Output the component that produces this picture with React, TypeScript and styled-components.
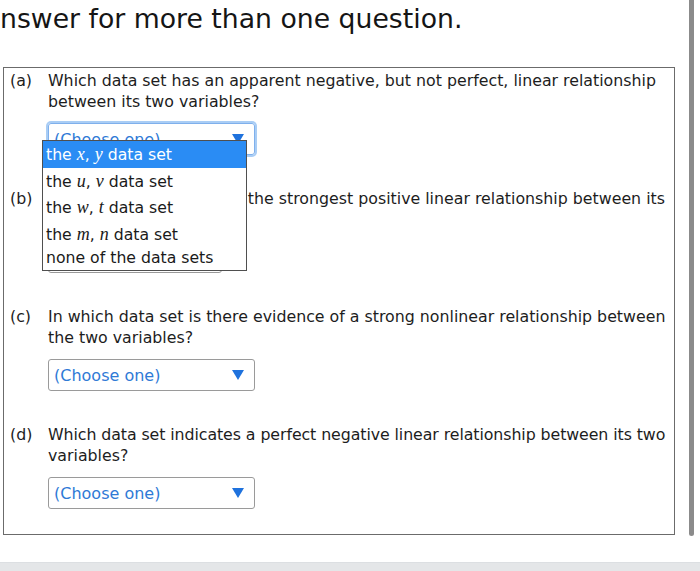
import styled, { createGlobalStyle } from 'styled-components';

const GlobalStyle = createGlobalStyle`
  html, body {
    margin: 0;
    padding: 0;
    background: #ffffff;
  }
  body {
    font-family: "DejaVu Sans", Verdana, sans-serif;
    color: #1d1d1d;
  }
`;

const Page = styled.div`
  position: relative;
  width: 700px;
  height: 571px;
  overflow: hidden;
  background: #fff;
`;

const Header = styled.div`
  height: 67px;
  box-sizing: border-box;
  padding: 1px 0 0 0;
  font-size: 26.7px;
  line-height: 36px;
  white-space: nowrap;
  color: #151515;
`;

const QuizBox = styled.div`
  margin-left: 3px;
  width: 672px;
  box-sizing: border-box;
  border: 1px solid #6b6b6b;
  padding: 2px 0 25px 6px;
  display: flex;
  flex-direction: column;
  gap: 33px;
`;

const Question = styled.div`
  display: grid;
  grid-template-columns: 38px 1fr;
  font-size: 15.8px;
  line-height: 21px;
`;

const Label = styled.div`
  white-space: nowrap;
`;

const Body = styled.div`
  display: flex;
  flex-direction: column;
`;

const Line = styled.div<{ $tight?: boolean }>`
  white-space: nowrap;
  letter-spacing: ${(p) => (p.$tight ? '-0.08px' : 'normal')};
`;

const SelectWrap = styled.div`
  position: relative;
  margin-top: 11px;
  align-self: flex-start;
`;

const Select = styled.div<{ $focused?: boolean; $width?: number }>`
  box-sizing: border-box;
  width: ${(p) => p.$width ?? 207}px;
  height: 32px;
  display: flex;
  align-items: center;
  justify-content: space-between;
  padding: 0 10px 0 5px;
  border: 1px solid ${(p) => (p.$focused ? '#7fb0ec' : '#9a9a9a')};
  border-radius: 3px;
  box-shadow: ${(p) => (p.$focused ? '0 0 0 2px #a9cdf5' : 'none')};
  color: #2f7ad6;
  font-size: 16px;
`;

const Arrow = () => (
  <svg width="12" height="10" viewBox="0 0 12 10">
    <polygon points="0,0 12,0 6,10" fill="#1f72dd" />
  </svg>
);

const OptionList = styled.ul`
  position: absolute;
  z-index: 2;
  top: 17px;
  left: -6px;
  width: 205px;
  margin: 0;
  padding: 0 0 1px 0;
  box-sizing: border-box;
  list-style: none;
  background: #fff;
  border: 1px solid #4f4f4f;
  font-size: 15.7px;
`;

const Option = styled.li<{ $active?: boolean }>`
  height: 26.5px;
  line-height: 26px;
  padding-left: 3px;
  white-space: nowrap;
  background: ${(p) => (p.$active ? '#2a8cf4' : 'transparent')};
  color: ${(p) => (p.$active ? '#ffffff' : '#1a1a1a')};

  &:last-child {
    height: 22px;
    line-height: 22px;
  }
`;

const Var = styled.i`
  font-family: "Liberation Serif", "Times New Roman", serif;
  font-size: 18px;
`;

const ScrollThumb = styled.div`
  position: absolute;
  top: 0;
  left: 689px;
  width: 5px;
  height: 536px;
  border-radius: 0 0 3px 3px;
  background: #8b8b8b;
`;

const BottomBar = styled.div`
  margin-top: 27px;
  height: 11px;
  background: #e4e6e8;
  border-top: 1px solid #dcdfe2;
`;

const options: [string, string][] = [
  ['x', 'y'],
  ['u', 'v'],
  ['w', 't'],
  ['m', 'n'],
];

function ChooseOne({ focused, width }: { focused?: boolean; width?: number }) {
  return (
    <Select $focused={focused} $width={width}>
      <span>(Choose one)</span>
      <Arrow />
    </Select>
  );
}

export default function App() {
  return (
    <Page>
      <GlobalStyle />
      <Header>nswer for more than one question.</Header>
      <QuizBox>
        <Question>
          <Label>(a)</Label>
          <Body>
            <Line>Which data set has an apparent negative, but not perfect, linear relationship</Line>
            <Line>between its two variables?</Line>
            <SelectWrap>
              <ChooseOne focused />
              <OptionList>
                {options.map(([a, b], i) => (
                  <Option key={a} $active={i === 0}>
                    the <Var>{a}</Var>, <Var>{b}</Var> data set
                  </Option>
                ))}
                <Option>none of the data sets</Option>
              </OptionList>
            </SelectWrap>
          </Body>
        </Question>
        <Question>
          <Label>(b)</Label>
          <Body>
            <Line>Which data set indicates the strongest positive linear relationship between its</Line>
            <Line>two variables?</Line>
            <SelectWrap>
              <ChooseOne width={174} />
            </SelectWrap>
          </Body>
        </Question>
        <Question>
          <Label>(c)</Label>
          <Body>
            <Line>In which data set is there evidence of a strong nonlinear relationship between</Line>
            <Line>the two variables?</Line>
            <SelectWrap>
              <ChooseOne />
            </SelectWrap>
          </Body>
        </Question>
        <Question>
          <Label>(d)</Label>
          <Body>
            <Line $tight>Which data set indicates a perfect negative linear relationship between its two</Line>
            <Line>variables?</Line>
            <SelectWrap>
              <ChooseOne />
            </SelectWrap>
          </Body>
        </Question>
      </QuizBox>
      <BottomBar />
      <ScrollThumb />
    </Page>
  );
}
